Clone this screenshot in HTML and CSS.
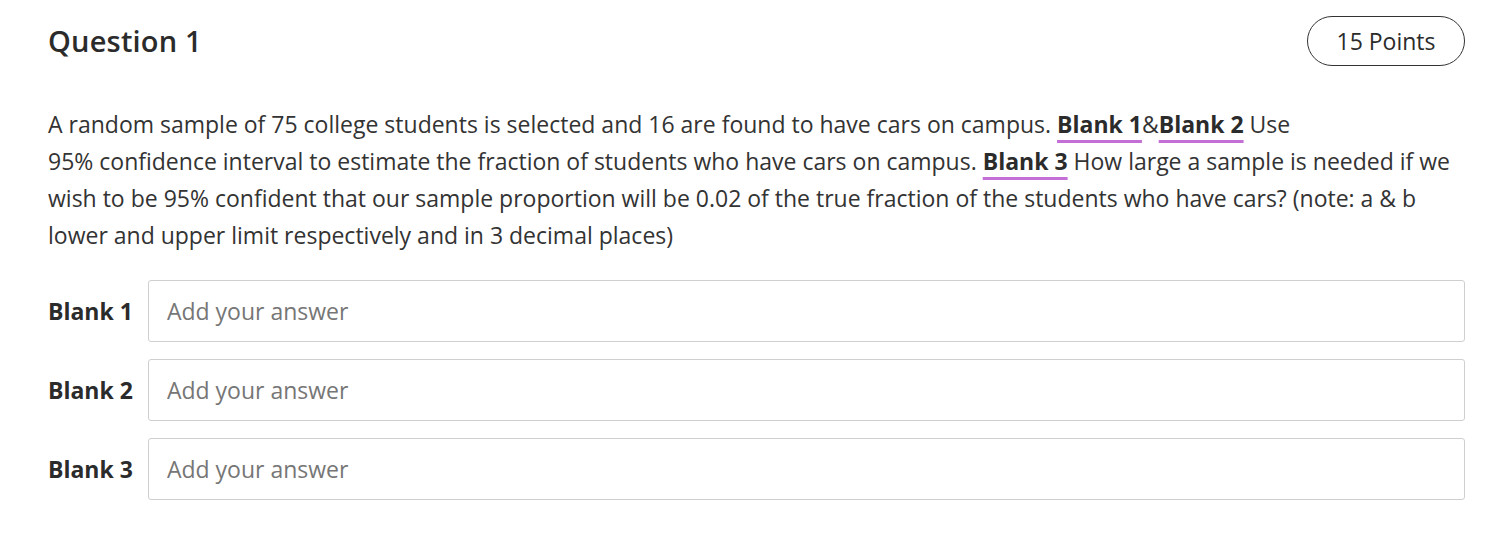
FILE: index.html
```html
<!DOCTYPE html>
<html>
<head>
<meta charset="utf-8">
<link rel="stylesheet" href="styles.css">
</head>
<body>
<div class="question">
  <div class="header">
    <h1 class="title">Question 1</h1>
    <span class="points">15 Points</span>
  </div>
  <p class="prompt">A random sample of 75 college students is selected and 16 are found to have cars on campus. <span class="blank">Blank 1</span>&amp;<span class="blank">Blank 2</span> Use<br>95% confidence interval to estimate the fraction of students who have cars on campus. <span class="blank">Blank 3</span> How large a sample is needed if we wish to be 95% confident that our sample proportion will be 0.02 of the true fraction of the students who have cars? (note: a &amp; b lower and upper limit respectively and in 3 decimal places)</p>
  <div class="answers">
    <div class="answer-row">
      <label class="answer-label">Blank 1</label>
      <input class="answer-input" type="text" placeholder="Add your answer">
    </div>
    <div class="answer-row">
      <label class="answer-label">Blank 2</label>
      <input class="answer-input" type="text" placeholder="Add your answer">
    </div>
    <div class="answer-row">
      <label class="answer-label">Blank 3</label>
      <input class="answer-input" type="text" placeholder="Add your answer">
    </div>
  </div>
</div>
</body>
</html>
```

FILE: styles.css
```css
html, body {
  margin: 0;
  padding: 0;
  background: #ffffff;
}

body {
  font-family: "Open Sans", "Liberation Sans", sans-serif;
  color: #323130;
}

.question {
  padding: 16px 32px 0 48px;
}

.header {
  display: flex;
  justify-content: space-between;
  align-items: center;
  height: 50px;
}

.title {
  margin: 0;
  font-size: 29px;
  font-weight: 600;
  color: #2b2b2b;
  line-height: 50px;
  letter-spacing: 0.2px;
}

.points {
  display: inline-flex;
  align-items: center;
  justify-content: center;
  box-sizing: border-box;
  width: 158px;
  height: 50px;
  border: 1px solid #333333;
  border-radius: 25px;
  font-size: 23px;
  color: #2b2b2b;
}

.prompt {
  margin: 40px 0 0 0;
  font-size: 23px;
  line-height: 37px;
  color: #333333;
}

.blank {
  font-weight: 700;
  color: #2b2b2b;
  text-decoration-line: underline;
  text-decoration-color: #c36fd6;
  text-decoration-thickness: 3px;
  text-underline-offset: 7px;
  text-decoration-skip-ink: none;
}

.answers {
  display: flex;
  flex-direction: column;
  gap: 17px;
  margin-top: 26px;
}

.answer-row {
  display: flex;
  align-items: center;
  gap: 15px;
}

.answer-label {
  font-size: 23px;
  font-weight: 700;
  color: #2b2b2b;
  white-space: nowrap;
}

.answer-input {
  flex: 1;
  box-sizing: border-box;
  height: 62px;
  border: 1px solid #cfcfcf;
  border-radius: 3px;
  padding: 0 18px;
  font-family: "Open Sans", "Liberation Sans", sans-serif;
  font-size: 23px;
  color: #333333;
  outline: none;
}

.answer-input::placeholder {
  color: #767676;
}
```
